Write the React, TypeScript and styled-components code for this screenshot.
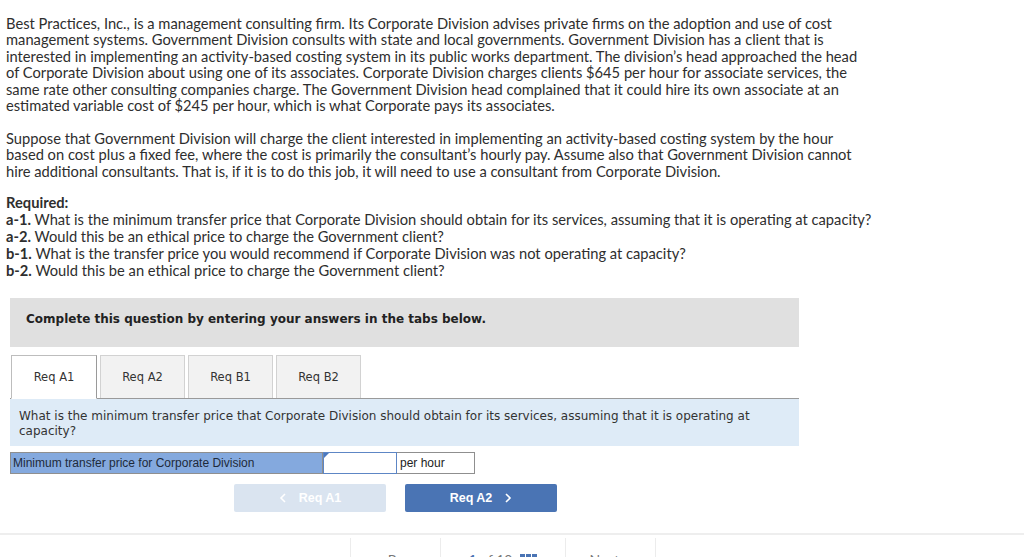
import styled, { createGlobalStyle } from 'styled-components'

const GlobalStyle = createGlobalStyle`
  html, body {
    margin: 0;
    padding: 0;
    background: #fff;
    overflow: hidden;
  }
  body {
    height: 557px;
  }
`

const Page = styled.div`
  padding: 15px 6px 0 6px;
  color: #2e2e2e;
  font-family: Lato, "Noto Sans", sans-serif;
`

const Paragraph = styled.p`
  margin: 0 0 16.4px 0;
  font-size: 14.7px;
  line-height: 16.4px;
`

const Required = styled.div`
  font-size: 14.7px;
  line-height: 16.9px;
  margin-top: -1px;
  margin-bottom: 19px;

  & b {
    font-weight: 700;
  }
`

const Card = styled.div`
  margin-left: 4px;
  width: 789px;
  font-family: Verdana, "DejaVu Sans", sans-serif;
`

const Instruction = styled.div`
  background: #e0e0e0;
  height: 49px;
  box-sizing: border-box;
  padding: 14px 0 0 16px;
  font-size: 12px;
  font-weight: 700;
  color: #222;
  margin-bottom: 8px;
`

const TabBar = styled.div`
  display: flex;
  gap: 3px;
  padding-left: 1px;
  border-bottom: 1px solid #9a9a9a;
  height: 43px;
`

const Tab = styled.div<{ $active?: boolean }>`
  width: ${p => (p.$active ? 84 : 83)}px;
  height: 42px;
  display: flex;
  align-items: center;
  justify-content: center;
  font-size: 11.5px;
  color: #333;
  border: 1px solid ${p => (p.$active ? '#bdbdbd' : '#d2d2d2')};
  border-bottom: ${p => (p.$active ? '1px solid #fff' : 'none')};
  background: ${p => (p.$active ? '#fff' : '#f2f2f2')};
  position: relative;
  z-index: ${p => (p.$active ? 1 : 0)};
  ${p => (p.$active ? 'border-right-color: #9a9a9a;' : '')}
`

const Question = styled.div`
  background: #deebf7;
  padding: 10px 9px 8px 9px;
  font-size: 12px;
  line-height: 15px;
  color: #333;
  height: 29px;
`

const AnswerRow = styled.div`
  display: flex;
  margin-top: 6px;
  height: 22px;
  font-family: "Liberation Sans", Arial, sans-serif;
  font-size: 12px;
`

const LabelCell = styled.div`
  width: 313px;
  box-sizing: border-box;
  background: #84a9de;
  border: 1px solid #8f8f8f;
  display: flex;
  align-items: center;
  padding-left: 2px;
  color: #1e2a3a;
`

const InputCell = styled.div`
  width: 74px;
  box-sizing: border-box;
  border: 1px solid #5d86c5;
  background: #fff;
  position: relative;

  &::before {
    content: '';
    position: absolute;
    left: 0;
    top: 0;
    border-top: 5px solid #4a78c0;
    border-right: 5px solid transparent;
  }
`

const UnitCell = styled.div`
  width: 78px;
  box-sizing: border-box;
  border: 1px solid #8f8f8f;
  border-left: none;
  display: flex;
  align-items: center;
  padding-left: 3px;
  color: #222;
`

const NavRow = styled.div`
  display: flex;
  gap: 19px;
  margin: 10px 0 0 224px;
`

const NavButton = styled.div<{ $primary?: boolean }>`
  width: 152px;
  height: 28px;
  border-radius: 2px;
  display: flex;
  align-items: center;
  justify-content: center;
  gap: 12px;
  font-family: "Liberation Sans", Arial, sans-serif;
  font-size: 12.5px;
  font-weight: 700;
  color: #fff;
  background: ${p => (p.$primary ? '#4a74b4' : '#dae4f0')};
`

const Chevron = styled.svg`
  width: 8px;
  height: 10px;
`

const Footer = styled.div`
  margin: 21px -6px 0 -6px;
  border-top: 2px solid #eeeeee;
  padding: 3px 0 0 350px;
  display: flex;
  height: 40px;
`

const FooterItem = styled.div<{ $w: number }>`
  width: ${p => p.$w}px;
  box-sizing: border-box;
  border-left: 1px solid #ececec;
  border-right: 1px solid #ececec;
  margin-right: -1px;
  padding-top: 13px;
  display: flex;
  justify-content: center;
  gap: 8px;
  font-family: Lato, sans-serif;
  font-size: 14px;
  color: #777;
`

const Blue = styled.span`
  color: #4a74b4;
  font-weight: 700;
`

const GridIcon = styled.svg`
  width: 17px;
  height: 14px;
  margin-top: 3px;
`

export default function App() {
  return (
    <>
      <GlobalStyle />
      <Page>
        <Paragraph>
          Best Practices, Inc., is a management consulting firm. Its Corporate Division advises private firms on the adoption and use of cost<br />
          management systems. Government Division consults with state and local governments. Government Division has a client that is<br />
          interested in implementing an activity-based costing system in its public works department. The division’s head approached the head<br />
          of Corporate Division about using one of its associates. Corporate Division charges clients $645 per hour for associate services, the<br />
          same rate other consulting companies charge. The Government Division head complained that it could hire its own associate at an<br />
          estimated variable cost of $245 per hour, which is what Corporate pays its associates.
        </Paragraph>
        <Paragraph>
          Suppose that Government Division will charge the client interested in implementing an activity-based costing system by the hour<br />
          based on cost plus a fixed fee, where the cost is primarily the consultant’s hourly pay. Assume also that Government Division cannot<br />
          hire additional consultants. That is, if it is to do this job, it will need to use a consultant from Corporate Division.
        </Paragraph>
        <Required>
          <b>Required:</b><br />
          <b>a-1.</b> What is the minimum transfer price that Corporate Division should obtain for its services, assuming that it is operating at capacity?<br />
          <b>a-2.</b> Would this be an ethical price to charge the Government client?<br />
          <b>b-1.</b> What is the transfer price you would recommend if Corporate Division was not operating at capacity?<br />
          <b>b-2.</b> Would this be an ethical price to charge the Government client?
        </Required>
        <Card>
          <Instruction>Complete this question by entering your answers in the tabs below.</Instruction>
          <TabBar>
            <Tab $active>Req A1</Tab>
            <Tab>Req A2</Tab>
            <Tab>Req B1</Tab>
            <Tab>Req B2</Tab>
          </TabBar>
          <Question>
            What is the minimum transfer price that Corporate Division should obtain for its services, assuming that it is operating at<br />
            capacity?
          </Question>
          <AnswerRow>
            <LabelCell>Minimum transfer price for Corporate Division</LabelCell>
            <InputCell />
            <UnitCell>per hour</UnitCell>
          </AnswerRow>
          <NavRow>
            <NavButton>
              <Chevron viewBox="0 0 8 10">
                <path d="M6 1 L2 5 L6 9" fill="none" stroke="#fff" strokeWidth="1.6" />
              </Chevron>
              Req A1
            </NavButton>
            <NavButton $primary>
              Req A2
              <Chevron viewBox="0 0 8 10">
                <path d="M2 1 L6 5 L2 9" fill="none" stroke="#fff" strokeWidth="1.6" />
              </Chevron>
            </NavButton>
          </NavRow>
        </Card>
        <Footer>
          <FooterItem $w={91}>
            <Blue>‹</Blue> Prev
          </FooterItem>
          <FooterItem $w={126}>
            <span><Blue>1</Blue> of 10</span>
            <GridIcon viewBox="0 0 17 14">
              <rect x="0" y="0" width="5" height="4" fill="#4a74b4" />
              <rect x="6" y="0" width="5" height="4" fill="#4a74b4" />
              <rect x="12" y="0" width="5" height="4" fill="#4a74b4" />
              <rect x="0" y="5" width="5" height="4" fill="#4a74b4" />
              <rect x="6" y="5" width="5" height="4" fill="#4a74b4" />
              <rect x="12" y="5" width="5" height="4" fill="#4a74b4" />
            </GridIcon>
          </FooterItem>
          <FooterItem $w={91}>
            Next <Blue>›</Blue>
          </FooterItem>
        </Footer>
      </Page>
    </>
  )
}
